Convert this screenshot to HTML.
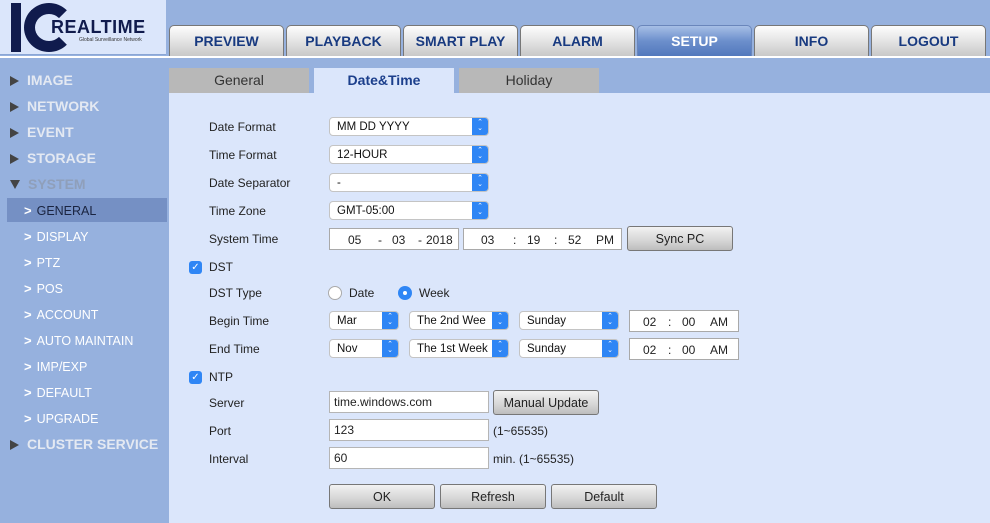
<!DOCTYPE html><html><head><meta charset="utf-8"><style>
*{box-sizing:border-box;margin:0;padding:0}
body{width:990px;height:523px;overflow:hidden;background:#96b1de;font-family:"Liberation Sans",Arial,sans-serif;position:relative;font-size:12px;color:#222}
.a{position:absolute}
#logo{left:0;top:0;width:166px;height:55px;background:#dbe6fb;border-bottom:1px solid #8aa6d6}
.nt{position:absolute;top:25px;height:31px;width:115px;border:1px solid #777;border-bottom:none;border-radius:5px 5px 0 0;background:linear-gradient(#fdfdfd,#e4e4e4 50%,#c8c8c8);color:#183a80;font-weight:bold;font-size:14px;text-align:center;line-height:30px}
.nt.on{background:linear-gradient(#a7bfe6,#6c8fcc 50%,#5278bd);color:#fff;border-color:#6a86bb}
#wl{left:0;top:56px;width:990px;height:2px;background:#fff}
.sm{position:absolute;left:10px;font-weight:bold;font-size:14px;color:#e4e9f2}
.sm i{display:inline-block;width:0;height:0;border-top:5px solid transparent;border-bottom:5px solid transparent;border-left:9px solid #444;margin-right:8px;vertical-align:-1px}
.ss{position:absolute;left:24px;color:#fff;font-size:12.5px}
.ss b{font-weight:bold;margin-right:5px;font-size:13px}
.tb{position:absolute;top:68px;height:25px;width:140px;background:#b8b8b8;text-align:center;line-height:25px;font-size:14px;color:#333}
#ct{left:169px;top:93px;width:821px;height:430px;background:#dbe6fb}
.l{position:absolute;left:209px;font-size:12px;color:#222}
.sel{position:absolute;height:19px;background:#fff;border:1px solid #c4c4c4;border-radius:4px;font-size:11.5px;line-height:19px;padding-left:7px;color:#111;overflow:hidden}
.sel:after{content:"⌃\A⌄";white-space:pre;position:absolute;right:0;top:-1px;width:16px;height:19px;background:#2f86f5;border-radius:0 4px 4px 0;color:#fff;font-size:7px;line-height:6px;text-align:center;padding-top:3px}
.box{position:absolute;height:22px;background:#fff;border:1px solid #a9a9a9;font-size:12px;line-height:22px}
.box span{position:absolute}
.btn{position:absolute;height:25px;border:1px solid #777;border-radius:3px;background:linear-gradient(#f2f2f2,#d5d5d5 60%,#bdbdbd);text-align:center;line-height:24px;font-size:12.5px;color:#222}
.inp{position:absolute;left:329px;width:160px;height:22px;background:#fff;border:1px solid #b5b5b5;padding-left:4px;line-height:21px;font-size:12px}
.cb{position:absolute;left:189px;width:13px;height:13px;background:#2f86f5;border-radius:3px;color:#fff;font-size:10px;line-height:13px;text-align:center}
.rd{position:absolute;width:14px;height:14px;border-radius:50%}
</style></head><body>
<div id="logo" class="a">
<div class="a" style="left:11px;top:3px;width:10px;height:49px;background:#101b4d"></div>
<div class="a" style="left:24px;top:3px;width:50px;height:49px;border:11px solid #101b4d;border-right-color:transparent;border-radius:50%"></div>
<div class="a" style="left:51px;top:17px;font-size:18px;font-weight:bold;color:#101b4d;letter-spacing:0.5px">REALTIME</div>
<div class="a" style="left:79px;top:37px;font-size:5px;color:#333">Global Surveillance Network</div>
</div>
<div class="nt" style="left:169px">PREVIEW</div>
<div class="nt" style="left:286px">PLAYBACK</div>
<div class="nt" style="left:403px">SMART PLAY</div>
<div class="nt" style="left:520px">ALARM</div>
<div class="nt on" style="left:637px">SETUP</div>
<div class="nt" style="left:754px">INFO</div>
<div class="nt" style="left:871px">LOGOUT</div>
<div id="wl" class="a"></div>
<div class="sm" style="top:72px"><i></i>IMAGE</div>
<div class="sm" style="top:98px"><i></i>NETWORK</div>
<div class="sm" style="top:124px"><i></i>EVENT</div>
<div class="sm" style="top:150px"><i></i>STORAGE</div>
<div class="sm" style="top:176px;color:#8f9fba"><i style="border-left:5px solid transparent;border-right:5px solid transparent;border-top:9px solid #444;border-bottom:none;vertical-align:0"></i>SYSTEM</div>
<div class="a" style="left:7px;top:198px;width:160px;height:24px;background:#7590c4"></div>
<div class="ss" style="top:203px;color:#1a2440"><b style="color:#fff">&gt;</b>GENERAL</div>
<div class="ss" style="top:229px"><b>&gt;</b>DISPLAY</div>
<div class="ss" style="top:255px"><b>&gt;</b>PTZ</div>
<div class="ss" style="top:281px"><b>&gt;</b>POS</div>
<div class="ss" style="top:307px"><b>&gt;</b>ACCOUNT</div>
<div class="ss" style="top:333px"><b>&gt;</b>AUTO MAINTAIN</div>
<div class="ss" style="top:359px"><b>&gt;</b>IMP/EXP</div>
<div class="ss" style="top:385px"><b>&gt;</b>DEFAULT</div>
<div class="ss" style="top:411px"><b>&gt;</b>UPGRADE</div>
<div class="sm" style="top:436px"><i></i>CLUSTER SERVICE</div>
<div class="tb" style="left:169px">General</div>
<div class="tb" style="left:314px;background:#dbe6fb;color:#1c3f8c;font-weight:bold">Date&amp;Time</div>
<div class="tb" style="left:459px">Holiday</div>
<div id="ct" class="a"></div>
<div class="l" style="top:120px">Date Format</div>
<div class="l" style="top:148px">Time Format</div>
<div class="l" style="top:176px">Date Separator</div>
<div class="l" style="top:204px">Time Zone</div>
<div class="l" style="top:232px">System Time</div>
<div class="sel" style="left:329px;top:117px;width:160px">MM DD YYYY</div>
<div class="sel" style="left:329px;top:145px;width:160px">12-HOUR</div>
<div class="sel" style="left:329px;top:173px;width:160px">-</div>
<div class="sel" style="left:329px;top:201px;width:160px">GMT-05:00</div>
<div class="box" style="left:329px;top:228px;width:130px"><span style="left:18px">05</span><span style="left:48px">-</span><span style="left:62px">03</span><span style="left:88px">-</span><span style="left:96px">2018</span></div>
<div class="box" style="left:463px;top:228px;width:159px"><span style="left:17px">03</span><span style="left:49px">:</span><span style="left:63px">19</span><span style="left:90px">:</span><span style="left:104px">52</span><span style="left:132px">PM</span></div>
<div class="btn" style="left:627px;top:226px;width:106px">Sync PC</div>
<div class="cb" style="top:261px">✓</div>
<div class="l" style="top:260px">DST</div>
<div class="l" style="top:286px">DST Type</div>
<div class="rd" style="left:328px;top:286px;background:#fff;border:1px solid #aaa"></div>
<div class="a" style="left:349px;top:286px">Date</div>
<div class="rd" style="left:398px;top:286px;background:#2f86f5"><div class="a" style="left:5px;top:5px;width:4px;height:4px;border-radius:50%;background:#fff"></div></div>
<div class="a" style="left:419px;top:286px">Week</div>
<div class="l" style="top:314px">Begin Time</div>
<div class="l" style="top:342px">End Time</div>
<div class="sel" style="left:329px;top:311px;width:70px">Mar</div>
<div class="sel" style="left:409px;top:311px;width:100px">The 2nd Wee</div>
<div class="sel" style="left:519px;top:311px;width:100px">Sunday</div>
<div class="box" style="left:629px;top:310px;width:110px"><span style="left:13px">02</span><span style="left:38px">:</span><span style="left:52px">00</span><span style="left:80px">AM</span></div>
<div class="sel" style="left:329px;top:339px;width:70px">Nov</div>
<div class="sel" style="left:409px;top:339px;width:100px">The 1st Week</div>
<div class="sel" style="left:519px;top:339px;width:100px">Sunday</div>
<div class="box" style="left:629px;top:338px;width:110px"><span style="left:13px">02</span><span style="left:38px">:</span><span style="left:52px">00</span><span style="left:80px">AM</span></div>
<div class="cb" style="top:371px">✓</div>
<div class="l" style="top:370px">NTP</div>
<div class="l" style="top:396px">Server</div>
<div class="l" style="top:424px">Port</div>
<div class="l" style="top:452px">Interval</div>
<div class="inp" style="top:391px">time.windows.com</div>
<div class="btn" style="left:493px;top:390px;width:106px">Manual Update</div>
<div class="inp" style="top:419px">123</div>
<div class="a" style="left:493px;top:424px">(1~65535)</div>
<div class="inp" style="top:447px">60</div>
<div class="a" style="left:493px;top:452px">min. (1~65535)</div>
<div class="btn" style="left:329px;top:484px;width:106px">OK</div>
<div class="btn" style="left:440px;top:484px;width:106px">Refresh</div>
<div class="btn" style="left:551px;top:484px;width:106px">Default</div>
</body></html>
